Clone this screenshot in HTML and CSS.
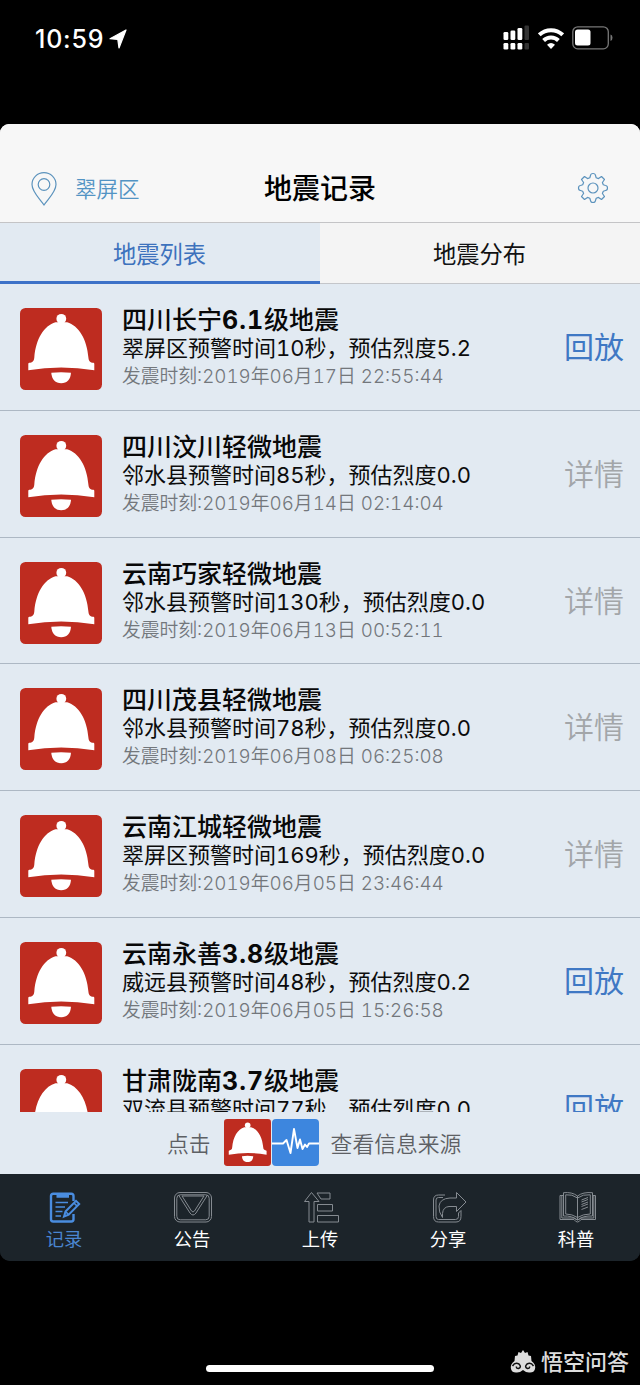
FILE: index.html
```html
<!DOCTYPE html>
<html lang="zh-CN">
<head>
<meta charset="utf-8">
<title>地震记录</title>
<link rel="stylesheet" href="styles.css">
</head>
<body>
<svg class="defs" aria-hidden="true">
  <symbol id="bell" viewBox="0 0 82 82">
    <rect width="82" height="82" rx="5.5" fill="#be2c20"/>
    <circle cx="41.3" cy="10.8" r="4.9" fill="#fff"/>
    <path fill="#fff" d="M35.5 14.2C24 17.500 15.800 31 14.300 49.500C14 53.500 12.300 54.500 9.300 54.800Q8.300 54.800 8.300 56V62.300Q41 56.500 74.300 62.300V56Q74.300 54.800 73.300 54.800C70.300 54.500 68.700 53.500 68.400 49.500C67 31 58.500 17.500 47.200 14.200Z"/>
    <path fill="#fff" d="M31.300 64.800Q41 63.500 51 64.800C50.600 71.500 47 75.200 41.200 75.200S31.700 71.500 31.300 64.800Z"/>
  </symbol>
</svg>
<div class="phone">
  <header class="status">
    <div class="clock">10:59<svg class="locate" viewBox="0 0 18 20"><path fill="#fff" stroke="#fff" stroke-width="1.200" stroke-linejoin="round" d="M17 1L10 19L8.800 10.500L1 9.700Z"/></svg></div>
    <div class="indicators">
      <svg width="27" height="26" viewBox="0 0 27 26" fill="#fff">
        <rect x=".5" y="7" width="4.800" height="8" rx="1.300"/><rect x="7.500" y="5.500" width="4.800" height="9.500" rx="1.300"/><rect x="14.500" y="3" width="4.800" height="12" rx="1.300"/>
        <rect x="21.500" y=".5" width="4.500" height="14.500" rx="1" fill="#333"/>
        <rect x=".5" y="18" width="4.800" height="6.500" rx="1.300"/><rect x="7.500" y="18" width="4.800" height="6.500" rx="1.300"/><rect x="14.500" y="18" width="4.800" height="6.500" rx="1.300"/>
        <rect x="21.500" y="18" width="4.500" height="6.500" rx="1" fill="#333"/>
      </svg>
      <svg width="26" height="22" viewBox="0 0 26 22" fill="none" stroke="#fff" stroke-width="4">
        <path d="M1.300 7.800A17 17 0 0 1 24.700 7.800"/><path d="M5.600 13.500A10.700 10.700 0 0 1 20.400 13.500"/>
        <path d="M9 17.800Q13 14.300 17 17.800L13 22Z" fill="#fff" stroke="none"/>
      </svg>
      <svg width="41" height="24" viewBox="0 0 41 24"><rect x=".8" y=".8" width="35.500" height="22" rx="5" fill="none" stroke="#777" stroke-width="1.300"/><rect x="3" y="3.500" width="15.500" height="16" rx="2.500" fill="#fff"/><path d="M38.500 8.500Q40.500 9 40.500 11.800T38.500 15Z" fill="#777"/></svg>
    </div>
  </header>
  <main class="app">
    <nav class="titlebar">
      <div class="place">
        <svg width="26" height="34" viewBox="0 0 26 34" fill="none" stroke="#5c93bd" stroke-width="1.200"><path d="M13 33C9 27 1 20 1 12.500A12 11.800 0 0 1 25 12.500C25 20 17 27 13 33Z"/><circle cx="13" cy="12.500" r="5.800"/></svg>
        <span>翠屏区</span>
      </div>
      <h1>地震记录</h1>
      <svg class="gear" width="32" height="32" viewBox="-16 -16 32 32" fill="none" stroke="#5c93bd" stroke-width="1.200" stroke-linejoin="round"><path d="M-2.500-12.500Q-2.300-14.500 0-14.500T2.500-12.500L3.200-10.300L5.500-9.400L8.500-11.500L11.500-8.500L9.400-5.500L10.300-3.200L12.500-2.500Q14.500-2.300 14.500 0T12.500 2.500L10.300 3.200L9.400 5.500L11.500 8.500L8.500 11.500L5.500 9.400L3.200 10.300L2.500 12.500Q2.300 14.500 0 14.500T-2.500 12.500L-3.200 10.300L-5.500 9.400L-8.500 11.500L-11.500 8.500L-9.400 5.500L-10.300 3.200L-12.500 2.500Q-14.500 2.300-14.500 0T-12.500-2.500L-10.300-3.200L-9.400-5.500L-11.500-8.500L-8.500-11.500L-5.500-9.400L-3.200-10.300Z"/><circle r="5"/></svg>
    </nav>
    <div class="tabs"><div class="tab selected">地震列表</div><div class="tab">地震分布</div></div>
    <section class="list">
      <article class="row"><svg class="bell"><use href="#bell"/></svg><div class="info"><h2>四川长宁<b>6.1</b>级地震</h2><p>翠屏区预警时间10秒，预估烈度5.2</p><time>发震时刻:2019年06月17日 22:55:44</time></div><a class="action replay">回放</a></article>
      <article class="row"><svg class="bell"><use href="#bell"/></svg><div class="info"><h2>四川汶川轻微地震</h2><p>邻水县预警时间85秒，预估烈度0.0</p><time>发震时刻:2019年06月14日 02:14:04</time></div><a class="action">详情</a></article>
      <article class="row"><svg class="bell"><use href="#bell"/></svg><div class="info"><h2>云南巧家轻微地震</h2><p>邻水县预警时间130秒，预估烈度0.0</p><time>发震时刻:2019年06月13日 00:52:11</time></div><a class="action">详情</a></article>
      <article class="row"><svg class="bell"><use href="#bell"/></svg><div class="info"><h2>四川茂县轻微地震</h2><p>邻水县预警时间78秒，预估烈度0.0</p><time>发震时刻:2019年06月08日 06:25:08</time></div><a class="action">详情</a></article>
      <article class="row"><svg class="bell"><use href="#bell"/></svg><div class="info"><h2>云南江城轻微地震</h2><p>翠屏区预警时间169秒，预估烈度0.0</p><time>发震时刻:2019年06月05日 23:46:44</time></div><a class="action">详情</a></article>
      <article class="row"><svg class="bell"><use href="#bell"/></svg><div class="info"><h2>云南永善<b>3.8</b>级地震</h2><p>威远县预警时间48秒，预估烈度0.2</p><time>发震时刻:2019年06月05日 15:26:58</time></div><a class="action replay">回放</a></article>
      <article class="row"><svg class="bell"><use href="#bell"/></svg><div class="info"><h2>甘肃陇南<b>3.7</b>级地震</h2><p>双流县预警时间77秒，预估烈度0.0</p></div><a class="action replay">回放</a></article>
    </section>
    <div class="hint">
      <span>点击</span>
      <div class="sources">
        <svg width="47" height="47"><use href="#bell"/></svg>
        <svg width="47" height="47" viewBox="0 0 47 47"><rect width="47" height="47" rx="4" fill="#3d86de"/><path d="M0 24.500H11L14.500 21L18.500 34L22 10L25.500 29L28 20.500L30.500 30L33 25.500L35 28L37 24.500H47" fill="none" stroke="#fff" stroke-width="1.900" stroke-linejoin="round"/></svg>
      </div>
      <span>查看信息来源</span>
    </div>
    <footer class="bottom">
      <div class="item active">
        <svg viewBox="0 0 40 34" fill="none"><path stroke-width="2.400" d="M29.500 10V5Q29.500 2.800 27.300 2.800H9.200Q7 2.800 7 5V28.300Q7 30.500 9.200 30.500H27.300Q29.500 30.500 29.500 28.300V23"/><path d="M12.500 2.500H25V6.800H12.500Z" fill="#4a8de0" stroke="none"/><path d="M11.500 11.500H24M11.500 16H21M11.500 20.500H18.500M11.500 25H17" stroke-width="1.700"/><path d="M21.500 20.500L32 9.800L35.200 13L24.700 23.700L20 25.500Z" stroke-width="2"/><path d="M30 12L33 15M22 21L24.500 23.500" stroke-width="1.700"/></svg>
        <span>记录</span></div>
      <div class="item">
        <svg viewBox="0 0 40 34"><rect x="2.500" y="1.500" width="37" height="29.500" rx="5.500"/><rect x="4.800" y="3.800" width="32.400" height="25" rx="3.500"/><path d="M6.500 4L18 22Q21 26 24 22L35.500 4M10 5H32L22.500 20Q21 22 19.500 20Z"/></svg>
        <span>公告</span></div>
      <div class="item">
        <svg viewBox="0 0 40 34"><path d="M11.500 1.500L4.500 10.500H9V31H14V10.500H19ZM17 2H30V8H21ZM17.500 13.500H32.500V20H17.500ZM17.500 24.500H38.500V31H17.500Z"/></svg>
        <span>上传</span></div>
      <div class="item">
        <svg viewBox="0 0 40 34"><path d="M17 4H10.500Q5.500 4 5.500 9V25.500Q5.500 31 10.500 31H28Q33 31 33 25.500V19.500L30.500 22V25.500Q30.500 28.500 27.500 28.500H10.500Q8 28.500 8 25.500V9Q8 6.500 10.500 6.500H15M28.500 1.500V7H22Q12 7.500 11 15Q10.500 21 14.500 26.500V22.500Q15 16 21 15.500H28.500V20.500L38 11Z"/></svg>
        <span>分享</span></div>
      <div class="item">
        <svg viewBox="0 0 40 34"><path d="M21.500 5Q16 .8 7.500 1.700V25Q16 24.500 21.500 29Q27 24.500 36.500 25V1.700Q27 .8 21.500 5ZM21.500 7Q16 3 9.700 3.800V23Q16 23 21.500 26.500Q27 23 34.300 23V3.800Q27 3 21.500 7ZM21.500 5V29M7.500 4.500H4V28.500H18Q21.500 33.500 25 28.500H39.500V4.500H36.500M5.800 5V27H18Q21.500 30.500 25 27H37.800V5M25.500 9L32 6.500M25.500 11L32 8.500M25.500 13.500L32 11M25.500 15.500L32 13M25.500 18.500L32 16"/></svg>
        <span>科普</span></div>
    </footer>
  </main>
  <div class="base">
    <div class="home"></div>
    <div class="watermark">
      <svg width="26" height="24" viewBox="0 0 26 24"><path fill="#ddd" d="M13 0L15 3L17.500 2L18.500 5.500L21 6L21.500 11Q26 14 25 19Q24 23 19 22.500Q16 22.500 13 20Q10 22.500 7 22.500Q2 23 1 19Q0 14 4.500 11L5 6L7.500 5.500L8.500 2L11 3Z"/><path d="M2.500 16Q5 12 9 14Q12 17 8.500 18.500Q6 18.500 6.500 16.500M23.500 16Q21 12 17 14Q14 17 17.500 18.500Q20 18.500 19.500 16.500" fill="none" stroke="#111" stroke-width="1.500"/></svg>
      <span>悟空问答</span>
    </div>
  </div>
</div>
</body>
</html>
```

FILE: styles.css
```css
* { box-sizing: border-box; }
body { margin: 0; background: #000; font-family: Inter, "Noto Sans CJK SC", sans-serif; }
svg { display: block; flex: none; }
h1, h2, p { margin: 0; }
.defs { position: absolute; width: 0; height: 0; }
.phone { width: 640px; height: 1385px; background: #000; overflow: hidden; display: flex; flex-direction: column; }

.status { height: 124px; padding: 24px 27px 0 35px; display: flex; justify-content: space-between; align-items: flex-start; }
.clock { display: flex; align-items: center; gap: 5px; height: 30px; font-size: 25px; line-height: 30px; font-weight: 500; color: #fff; letter-spacing: 0.8px; }
.locate { width: 18px; height: 20px; }
.indicators { display: flex; align-items: center; gap: 8px; height: 28px; }

.app { height: 1137px; display: flex; flex-direction: column; overflow: hidden; border-radius: 9px 9px 10px 10px; background: linear-gradient(#f7f7f7 0 50%, #1c242a 50%); }
.titlebar { height: 99px; padding: 32px 31px 0; display: grid; grid-template-columns: 1fr auto 1fr; align-items: center; background: #f7f7f7; border-bottom: 1px solid #c4c4c6; }
.place { display: flex; align-items: center; gap: 18px; font-size: 21.5px; font-weight: 350; color: #5394c4; }
.place span { padding-bottom: 4px; }
h1 { font-size: 28px; line-height: 40px; font-weight: 500; color: #000; }
.gear { justify-self: end; margin-bottom: 2px; }
.tabs { height: 61px; display: flex; }
.tab { flex: 1; padding: 2px 1px 0 0; line-height: 60px; text-align: center; font-size: 23.3px; background: #f4f4f4; color: #111; border-bottom: 1px solid #c4c6ca; }
.tab.selected { background: #e2eaf2; color: #3d72bd; border-bottom: 3px solid #3d72c8; }

.list { height: 828px; overflow: hidden; background: #e2eaf2; }
.row { height: 126.8px; padding: 22px 16px 0 20px; display: flex; border-bottom: 1px solid #adb8c4; }
.bell { width: 82px; height: 82px; margin-top: 2px; }
.info { flex: 1; margin-left: 20px; white-space: nowrap; font-variant-numeric: tabular-nums; }
.info h2 { font-size: 25px; line-height: 28px; font-weight: 500; color: #080808; }
.info b { font-weight: 700; letter-spacing: 1px; }
.info p { font-size: 22px; line-height: 28px; font-weight: 380; color: #0c0c0c; }
.info time { display: block; padding-top: 1px; font-size: 18.8px; line-height: 28px; font-weight: 350; color: #73777c; }
.action { font-size: 30px; line-height: 83px; font-weight: 350; color: #a3a6a9; }
.action.replay { font-weight: 400; color: #3f78c4; }

.hint { height: 62px; display: flex; align-items: center; padding: 0 0 1px 167px; font-size: 21.8px; font-weight: 350; color: #5d6064; background: #e2eaf2; }
.hint span { padding-bottom: 1px; }
.sources { display: flex; gap: 1px; margin: 0 12px 0 13px; }

.bottom { height: 87px; display: flex; background: #1c242a; }
.item { flex: 1; padding-top: 17px; display: flex; flex-direction: column; align-items: center; color: #fff; font-size: 18.3px; line-height: 28px; }
.item svg { width: 40px; height: 34px; fill: none; stroke: #858b91; stroke-width: 1; }
.item.active { color: #4a86d0; }
.item.active svg { stroke: #4a8de0; }

.base { height: 124px; position: relative; }
.home { position: absolute; left: 206px; top: 104px; width: 228px; height: 7px; border-radius: 4px; background: #fff; }
.watermark { position: absolute; left: 510px; top: 85px; display: flex; align-items: center; gap: 5px; font-size: 22px; line-height: 32px; font-weight: 500; color: #ddd; }
```
